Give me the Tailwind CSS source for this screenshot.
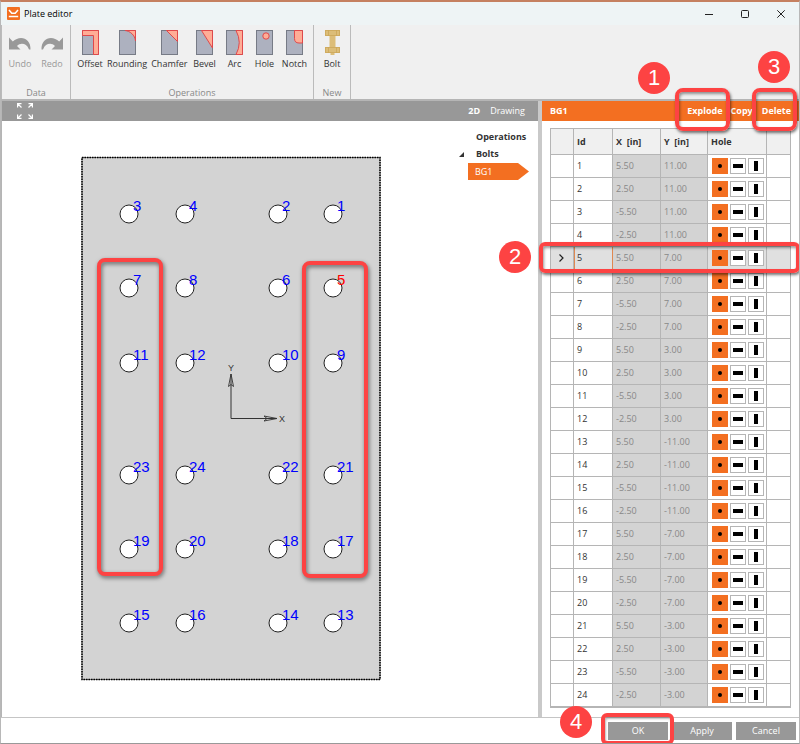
<!DOCTYPE html>
<html lang="en">
<head>
    <meta charset="UTF-8">
    <meta name="viewport" content="width=device-width, initial-scale=1.0">
    <title>Plate editor</title>
    <script src="https://cdn.jsdelivr.net/npm/@tailwindcss/browser@4"></script>
</head>
<body class="min-h-screen flex flex-col overflow-hidden bg-white border-t-2 border-b border-x border-t-[#c58060] border-b-[#999] border-x-[#b8b8b8] font-['Open_Sans','Segoe_UI',sans-serif] text-[9px] leading-3 text-[#333]">

    <!-- Title bar -->
    <header class="flex items-center h-[23px] pl-[6px] pr-[14px] bg-[#eef4f5] text-black">
        <svg class="w-[13px] h-[13px] mr-1" viewBox="0 0 13 13">
            <rect width="13" height="13" rx="1" fill="#f36f21"/>
            <path d="M2 3 4.800 6.300h3.400L11 3" stroke="#fff" stroke-width="1.500" fill="none"/>
            <path d="M1.800 9.500h9.400" stroke="#fff" stroke-width="1.500"/>
        </svg>
        <h1>Plate editor</h1>
        <div class="flex items-center gap-7 ml-auto">
            <button type="button" aria-label="Minimize"><svg class="w-2 h-2" viewBox="0 0 8 8"><path d="M0 4.5h8" stroke="#222" fill="none"/></svg></button>
            <button type="button" aria-label="Maximize"><svg class="w-2 h-2" viewBox="0 0 8 8"><rect x=".5" y=".5" width="7" height="7" rx="1" stroke="#222" fill="none"/></svg></button>
            <button type="button" aria-label="Close"><svg class="w-2 h-2" viewBox="0 0 8 8"><path d="M.3.3l7.4 7.4M7.7.3L.3 7.7" stroke="#222" fill="none"/></svg></button>
        </div>
    </header>

    <!-- Ribbon -->
    <nav class="relative flex h-[74px] bg-[#f0f0f0] border-l border-[#bbb]">
        <section class="flex flex-col w-[69px] pt-[5px] border-r border-[#bbb]">
            <div class="flex justify-center text-[#999]">
                <button type="button" class="flex flex-col items-center w-8 gap-[3px]" disabled>
                    <svg class="w-6 h-[25px]" viewBox="0 0 24 25">
                        <path d="M1 7.500v12h11.500L9 16C12.500 12.500 18.500 13 21 19.500h1.500C23 8 12 4.500 4.800 11.500z" fill="#999"/>
                    </svg>
                    <span>Undo</span>
                </button>
                <button type="button" class="flex flex-col items-center w-8 gap-[3px]" disabled>
                    <svg class="w-6 h-[25px]" viewBox="0 0 24 25">
                        <path d="M23 7.500v12H11.500L15 16C11.500 12.500 5.500 13 3 19.500H1.500C1 8 12 4.500 19.200 11.500z" fill="#999"/>
                    </svg>
                    <span>Redo</span>
                </button>
            </div>
            <h2 class="mt-auto text-center text-[#888]">Data</h2>
        </section>
        <section class="flex flex-col w-[243px] pt-[5px] border-r border-[#bbb]">
            <div id="operations" class="flex pl-1"></div>
            <h2 class="mt-auto text-center text-[#888]">Operations</h2>
        </section>
        <section class="flex flex-col w-[37px] pt-[5px] border-r border-[#bbb]">
            <button type="button" class="flex flex-col items-center gap-[3px]">
                <svg class="w-[17px] h-[25px]" viewBox="0 0 17 25">
                    <path d="M5.500 6h6v12h-6zM6.500 22h4v3h-4z" fill="#dcbd78"/>
                    <path d="M1 0h15v6H1zM1 17h15v6H1z" fill="#dcbd78"/>
                    <path d="M1.500 1v4M4.500.500v5M12.500.500v5M15.500 1v4M1.500 18v4M4.500 17.500v5M12.500 17.500v5M15.500 18v4M1 .500h15M1 5.500h15M1 17.500h15M1 22.500h15" stroke="#c9a455" stroke-width=".7"/>
                </svg>
                <span>Bolt</span>
            </button>
            <h2 class="mt-auto text-center text-[#888]">New</h2>
        </section>

        <!-- Step badges -->
        <span class="absolute z-20 right-[129px] top-[37px] flex items-center justify-center size-8 rounded-full bg-[#fd4343] text-white text-[22px] font-['Liberation_Sans',sans-serif]">1</span>
        <span class="absolute z-20 right-[9px] top-[26px] flex items-center justify-center size-8 rounded-full bg-[#fd4343] text-white text-[22px] font-['Liberation_Sans',sans-serif]">3</span>
    </nav>

    <main class="flex flex-1 border-t-2 border-l border-[#b5b5b5]">
        <!-- Drawing -->
        <section class="flex flex-col flex-1">
            <div class="flex items-center h-5 pl-[15px] pr-[13px] bg-[#989898] text-white">
                <button type="button" aria-label="Fit to view">
                    <svg class="w-4 h-4" viewBox="0 0 16 16" fill="none" stroke="#fff" stroke-width="1.200">
                        <path d="M.600 4.500V.600h3.900M1 1l3.500 3.500M11.500.600h3.900v3.900M15 1l-3.500 3.500M.600 11.500v3.900h3.900M1 15l3.500-3.500M15.400 11.500v3.900h-3.900M15 15l-3.500-3.500"/>
                    </svg>
                </button>
                <a href="#" class="ml-auto mr-[10px] font-bold">2D</a>
                <a href="#">Drawing</a>
            </div>
            <div class="flex flex-1 justify-between pl-[78px] pr-2">
                <svg id="plate" class="w-[302px] h-[525px] mt-[35px]" viewBox="80 156 302 525" font-family="Liberation Sans, Arial, sans-serif" font-size="15">
                    <rect x="82" y="157.500" width="298" height="522" fill="#d3d3d3" stroke="#777"/>
                    <rect x="82" y="157.500" width="298" height="522" fill="none" stroke="#000" stroke-width="1.500" stroke-dasharray="1.500 1"/>
                    <g id="bolts" stroke="#222"></g>
                    <g fill="none" stroke="#333">
                        <path d="M231 374v44.500h46"/>
                        <path d="M228.500 386.500 231 374l2.500 12.500-2.500-2z M264 416l13 2.500-13 2.500 3-2.500z" stroke-width=".9"/>
                    </g>
                    <g font-size="9" fill="#333">
                        <text x="228" y="371">Y</text>
                        <text x="279" y="422">X</text>
                    </g>
                    <g class="drop-shadow-[1px_2px_2px_#0008]" fill="none" stroke="#fd4343" stroke-width="4">
                        <rect x="99" y="260" width="62" height="314" rx="6"/>
                        <rect x="304" y="263" width="62" height="313" rx="6"/>
                    </g>
                </svg>
                <ul class="w-[72px] pt-[10px] font-bold">
                    <li class="pl-[18px] h-[17px]">Operations</li>
                    <li class="flex pl-[1px] h-[15px]">
                        <svg class="w-[5px] h-[5px] mt-1 mr-3" viewBox="0 0 5 5"><path d="M5 0v5H0z" fill="#333"/></svg>
                        Bolts
                    </li>
                    <li class="ml-[10px]">
                        <a href="#" class="block h-[17px] pl-[7px] w-[61px] leading-[17px] font-normal text-white bg-[#f36f21] [clip-path:polygon(0_0,82%_0,100%_50%,82%_100%,0_100%)]">BG1</a>
                    </li>
                </ul>
            </div>
        </section>

        <!-- Bolt table -->
        <section class="w-[261px] flex flex-col border-l-4 border-[#c9c9c9]">
            <div class="flex items-center h-5 pl-2 pr-[8px] bg-[#f36f21] text-white font-bold">
                <h2>BG1</h2>
                <button type="button" class="relative ml-auto">Explode
                    <span class="absolute z-10 -left-[12px] -right-[7px] -top-[17px] h-[43px] border-4 border-[#fd4343] rounded-lg shadow-[1px_2px_3px_#0008,inset_1px_2px_3px_#0006]"></span>
                </button>
                <button type="button" class="ml-2">Copy</button>
                <button type="button" class="relative ml-[9px]">Delete
                    <span class="absolute z-10 -left-[10px] -right-[6px] -top-[17px] h-[43px] border-4 border-[#fd4343] rounded-lg shadow-[1px_2px_3px_#0008,inset_1px_2px_3px_#0006]"></span>
                </button>
            </div>
            <div class="pl-2 pr-[8px] pt-[7px]">
                <table class="w-full table-fixed border-separate border-spacing-0 border-l border-t border-b border-[#b5b5b5] text-left">
                    <colgroup>
                        <col class="w-[23px]"><col class="w-[39px]"><col class="w-[48px]"><col class="w-[47px]"><col class="w-[59px]"><col>
                    </colgroup>
                    <thead>
                        <tr class="h-[26px] bg-[#f0f0f0]">
                            <th class="border-r border-b border-[#b5b5b5]"></th>
                            <th class="pl-[3px] border-r border-b border-[#b5b5b5]">Id</th>
                            <th class="pl-[3px] border-r border-b border-[#b5b5b5] whitespace-pre">X  [in]</th>
                            <th class="pl-[3px] border-r border-b border-[#b5b5b5] whitespace-pre">Y  [in]</th>
                            <th class="pl-[3px] border-r border-b border-[#b5b5b5]">Hole</th>
                            <th class="border-r border-b border-[#b5b5b5]"></th>
                        </tr>
                    </thead>
                    <tbody id="rows"></tbody>
                </table>
            </div>
        </section>
    </main>

    <footer class="flex items-center justify-end gap-1 h-[26px] pr-[3px] border-t border-[#c5c5c5] text-white">
        <button type="button" class="relative w-[60px] h-[18px] bg-[#989898]">OK
            <span class="absolute z-10 -left-[7px] -right-[6px] -top-[9px] -bottom-[5px] border-4 border-[#fd4343] rounded-md shadow-[inset_1px_2px_2px_#0004]"></span>
            <span class="absolute z-20 -left-12 -top-[16px] flex items-center justify-center size-8 rounded-full bg-[#fd4343] text-[22px] font-['Liberation_Sans',sans-serif]">4</span>
        </button>
        <button type="button" class="w-[60px] h-[18px] bg-[#989898]">Apply</button>
        <button type="button" class="w-[60px] h-[18px] bg-[#989898]">Cancel</button>
    </footer>

    <script>
        const operations = [
            ['Offset', '<path d="M.5.5h16v24h-5V5.500H.500z"/>'],
            ['Rounding', '<path d="M6 .5h10.500V11C16 5 11 1 6 .5z"/>'],
            ['Chamfer', '<path d="M5.500.5h11v11z"/>'],
            ['Bevel', '<path d="M5.500.5h11v17.500z"/>'],
            ['Arc', '<path d="M10 .5h6.500v24H10Q16.500 12.500 10 .5z"/>'],
            ['Hole', '<circle cx="10" cy="6" r="3.200"/>'],
            ['Notch', '<path d="M8.500.5h8V13H13Q8.500 13 8.500 8.500z"/>']
        ];
        document.getElementById('operations').innerHTML = operations.map(([name, cut]) => `
            <button type="button" class="flex flex-col items-center shrink-0 min-w-[30px] px-[2px] gap-[3px]">
                <svg class="w-[17px] h-[25px]" viewBox="0 0 17 25">
                    <rect x=".5" y=".5" width="16" height="24" fill="#adb1bf" stroke="#777b86"/>
                    <g fill="#ffad96" stroke="#e0494b">${cut}</g>
                </svg>
                <span>${name}</span>
            </button>`).join('');

        // Bolt ids as they lie on the plate, row by row
        const columns = [129, 185, 278, 333];
        const grid = [
            [214, [3, 4, 2, 1]],
            [288, [7, 8, 6, 5]],
            [363, [11, 12, 10, 9]],
            [475, [23, 24, 22, 21]],
            [549, [19, 20, 18, 17]],
            [623, [15, 16, 14, 13]]
        ];
        const selected = 5;
        document.getElementById('bolts').innerHTML = grid.map(([y, ids]) => ids.map((id, i) => `
            <circle cx="${columns[i]}" cy="${y}" r="9" fill="#fff"/>
            <text x="${columns[i] + 4}" y="${y - 3}" stroke="none" fill="${id === selected ? '#f00' : '#00f'}">${id}</text>`).join('')).join('');

        const xs = ['5.50', '2.50', '-5.50', '-2.50'];
        const ys = ['11.00', '7.00', '3.00', '-11.00', '-7.00', '-3.00'];
        let html = '';
        for (let id = 1; id <= 24; id++) {
            const x = xs[(id - 1) % 4];
            const y = ys[Math.floor((id - 1) / 4)];
            const current = id === selected;
            html += `
            <tr class="relative h-[23px] ${current ? 'bg-[#e0e0e0]' : 'bg-white'}">
                <td class="border-r border-b border-[#b5b5b5]">${current ? `
                    <svg class="w-[5px] h-2 ml-2" viewBox="0 0 5 8"><path d="M.500.500 4 4 .500 7.500" stroke="#222" stroke-width="1.200" fill="none"/></svg>
                    <span class="absolute z-10 -left-[12px] -right-[9px] -top-[5px] h-[31px] border-4 border-[#fd4343] rounded-md shadow-[1px_2px_3px_#0008,inset_1px_2px_3px_#0006]"></span>
                    <span class="absolute z-20 -left-[52px] -top-[6px] flex items-center justify-center size-8 rounded-full bg-[#fd4343] text-white text-[22px] font-['Liberation_Sans',sans-serif]">2</span>` : ''}
                </td>
                <td class="border-r border-b border-b-[#b5b5b5] ${current ? 'pl-[2px] border-l border-x-[#e08850]' : 'pl-[3px] border-r-[#b5b5b5]'}">${id}</td>
                <td class="pl-[3px] border-r border-b border-[#b5b5b5] bg-[#d3d3d3] text-[#888]">${x}</td>
                <td class="pl-[3px] border-r border-b border-[#b5b5b5] bg-[#d3d3d3] text-[#888]">${y}</td>
                <td class="border-r border-b border-[#b5b5b5]">
                    <div class="flex gap-[2px] pl-1">
                        <button type="button" aria-label="Round hole" aria-pressed="true" class="flex items-center justify-center size-4 bg-[#f36f21]"><i class="size-1 rounded-full bg-black"></i></button>
                        <button type="button" aria-label="Horizontal slot" class="flex items-center justify-center size-4 bg-white border border-[#b5b5b5]"><i class="w-[10px] h-1 bg-black"></i></button>
                        <button type="button" aria-label="Vertical slot" class="flex items-center justify-center size-4 bg-white border border-[#b5b5b5]"><i class="w-1 h-[10px] bg-black"></i></button>
                    </div>
                </td>
                <td class="border-r border-b border-[#b5b5b5]"></td>
            </tr>`;
        }
        document.getElementById('rows').innerHTML = html;
    </script>
</body>
</html>
